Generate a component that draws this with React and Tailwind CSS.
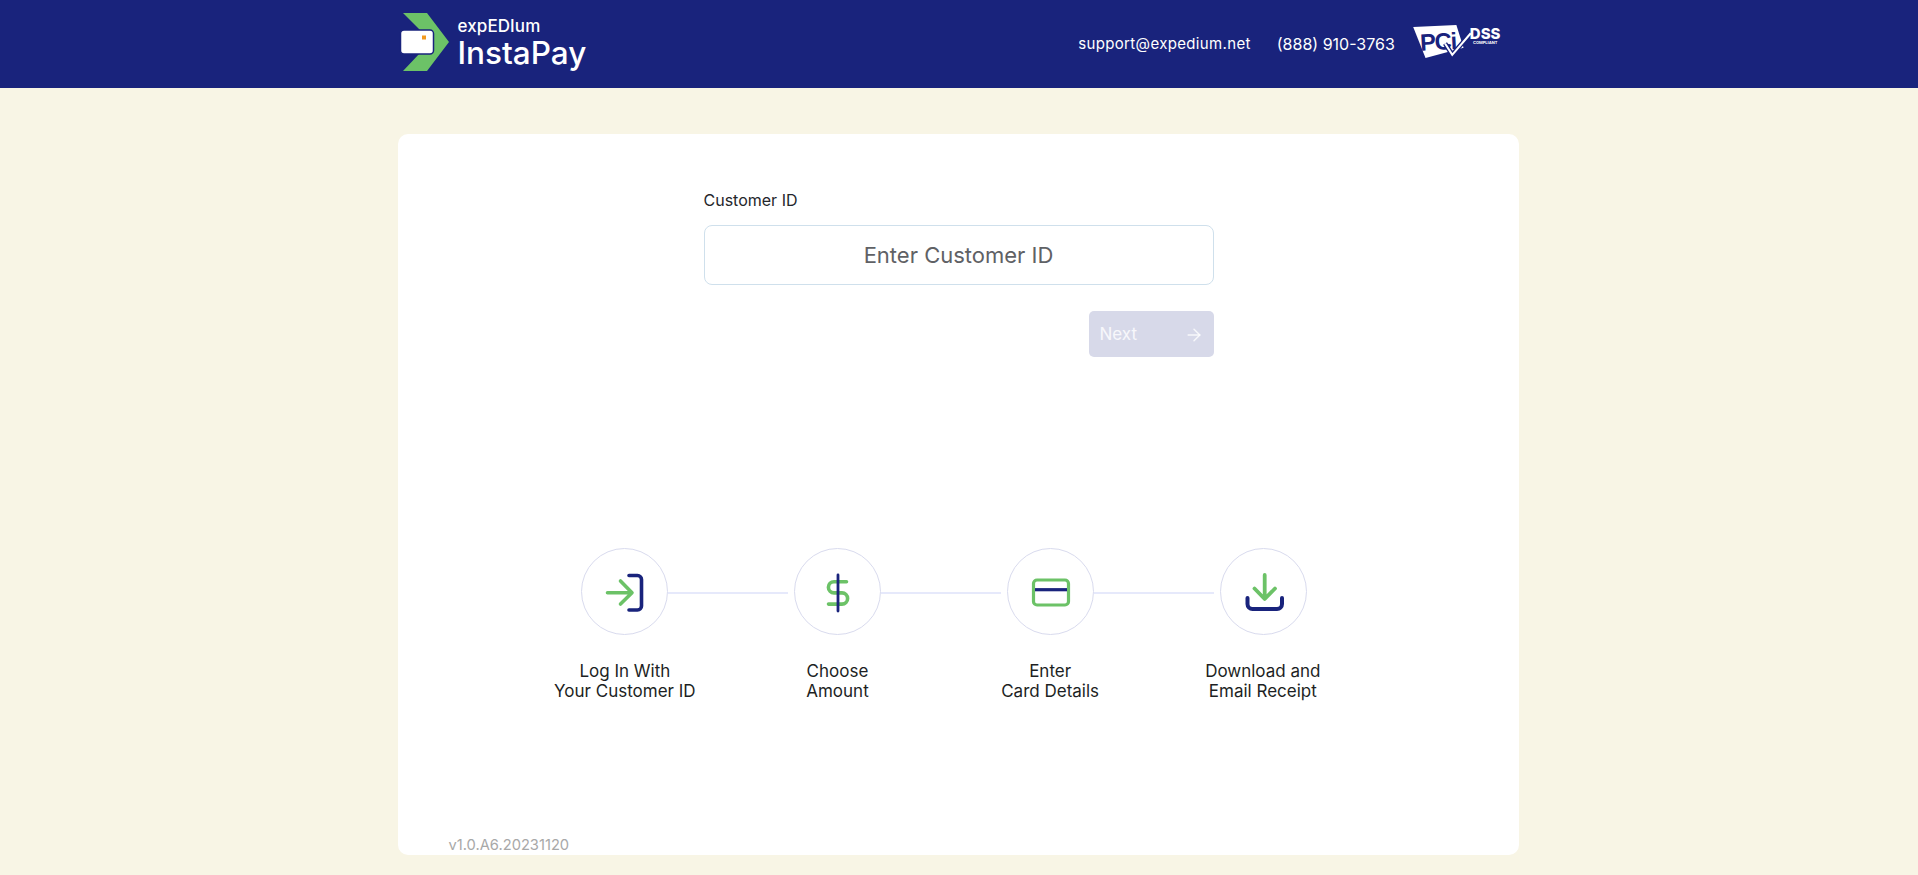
import { ArrowRight } from "lucide-react";

const steps = [
  { lines: ["Log In With", "Your Customer ID"], icon: "login" },
  { lines: ["Choose", "Amount"], icon: "dollar" },
  { lines: ["Enter", "Card Details"], icon: "card" },
  { lines: ["Download and", "Email Receipt"], icon: "download" },
];

const StepIcon = ({ icon }) => {
  const green = "#6cc267";
  const navy = "#19237c";
  return (
    <svg width="87" height="87" viewBox="0 0 87 87" fill="none" strokeLinecap="round" strokeLinejoin="round">
      {icon === "login" && (
        <>
          <path d="M26.5 44.7H50.5M39.5 33L51 44.7L39.5 56" stroke={green} strokeWidth="3.6" />
          <path d="M48 27.5H56.5a4 4 0 0 1 4 4V58a4 4 0 0 1-4 4H48" stroke={navy} strokeWidth="3.6" />
        </>
      )}
      {icon === "dollar" && (
        <>
          <path d="M52.5 33.7H40a5.6 5.6 0 0 0 0 11.2H48a5.6 5.6 0 0 1 0 11.2H34.5" stroke={green} strokeWidth="3.6" />
          <path d="M44 27V63" stroke={navy} strokeWidth="2.8" />
        </>
      )}
      {icon === "card" && (
        <>
          <rect x="26.5" y="32" width="35" height="25" rx="3.5" stroke={green} strokeWidth="3.2" />
          <path d="M28 41.7H60" stroke={navy} strokeWidth="3.2" strokeLinecap="butt" />
        </>
      )}
      {icon === "download" && (
        <>
          <path d="M44.7 27V50.5M34.5 40.5L44.7 51L55 40.5" stroke={green} strokeWidth="3.8" />
          <path d="M27.5 50V56a5 5 0 0 0 5 5H57a5 5 0 0 0 5-5V50" stroke={navy} strokeWidth="4" />
        </>
      )}
    </svg>
  );
};

const Logo = () => (
  <svg width="54" height="62" viewBox="0 0 54 62" fill="none">
    <path d="M5 3H29L51 32L29 61H5L22 43H30V20H22Z" fill="#6cc267" />
    <rect x="2.5" y="20" width="33" height="24" rx="3.5" fill="#ffffff" stroke="#19237c" strokeWidth="1.5" />
    <rect x="24" y="25.5" width="4" height="4" fill="#f39a1e" />
  </svg>
);

const PciLogo = () => (
  <svg width="60" height="37" viewBox="0 0 58 36" fill="none">
    <path d="M0 4L42 2L49 24L12 34Z" fill="#ffffff" />
    <text
      x="7"
      y="27"
      fill="#19237c"
      fontFamily="Liberation Sans, sans-serif"
      fontWeight="700"
      fontSize="23"
      letterSpacing="-1"
      transform="rotate(-3 7 27)"
    >
      PCi
    </text>
    <path d="M31 20L38 31L56 10" stroke="#19237c" strokeWidth="4.5" />
    <path d="M31 20L38 31L56 10" stroke="#ffffff" strokeWidth="2" />
  </svg>
);

export default function App() {
  return (
    <div className="min-h-[875px] flex flex-col bg-[#f8f5e5] font-['Inter',sans-serif]">
      <header className="h-[88px] bg-[#19237c] flex justify-center pr-[2px]">
        <div className="w-[1121px] flex items-center justify-between pr-[18px]">
          <div className="flex items-center gap-[6px]">
            <div className="-mt-[6px]">
              <Logo />
            </div>
            <div className="text-white pb-[2px]">
              <div className="text-[17px] leading-[18px] font-medium tracking-[0.1px]">expEDIum</div>
              <div className="mt-[2px] text-[31.5px] leading-[32px] font-medium">InstaPay</div>
            </div>
          </div>
          <div className="flex items-center text-white">
            <span className="text-[15px] tracking-[0.35px]">support@expedium.net</span>
            <span className="ml-[26px] text-[16px]">(888) 910-3763</span>
            <div className="ml-[18px] flex items-start -mt-[6px]">
              <PciLogo />
              <div className="-ml-[3px] mt-[4px] flex flex-col items-center">
                <span className="text-[15px] leading-[13px] font-extrabold">DSS</span>
                <span className="text-[4px] leading-[5px] font-bold">COMPLIANT</span>
              </div>
            </div>
          </div>
        </div>
      </header>

      <main className="flex justify-center pt-[46px] pb-[20px] pr-[2px]">
        <div className="w-[1121px] h-[721px] bg-white rounded-[10px] flex flex-col">
          <div className="w-[510px] ml-[306px] pt-[56px] flex flex-col">
            <label className="text-[16px] leading-[20px] text-[#24262b]">Customer ID</label>
            <input
              placeholder="Enter Customer ID"
              className="mt-[15px] h-[60px] w-full border border-[#cfe0ec] rounded-[8px] text-center text-[22px] outline-none placeholder:text-[#5f6165]"
            />
            <button className="mt-[26px] self-end w-[125px] h-[46px] rounded-[5px] bg-[#d7d9e9] text-white/80 text-[17px] flex items-center justify-between pt-[2px] pl-[11px] pr-[10px]">
              Next
              <ArrowRight size={20} strokeWidth={1.75} />
            </button>
          </div>

          <div className="mt-[191px] ml-[183px] flex items-center">
            {steps.map((step, i) => (
              <div key={step.icon} className="flex items-center">
                <div className="w-[87px] h-[87px] rounded-full border border-[#d9dbee]">
                  <div className="-m-px">
                    <StepIcon icon={step.icon} />
                  </div>
                </div>
                {i < steps.length - 1 && <div className="w-[120px] h-[2px] mt-[2px] mr-[6px] bg-[#e6e9fb]" />}
              </div>
            ))}
          </div>

          <div className="mt-[26px] ml-[121px] flex">
            {steps.map((step) => (
              <div key={step.icon} className="w-[212.67px] text-center text-[17px] leading-[20px] text-[#1d1f24]">
                {step.lines.map((line) => (
                  <div key={line}>{line}</div>
                ))}
              </div>
            ))}
          </div>

          <div className="mt-auto pl-[51px] pb-[1px] text-[14.7px] leading-[18px] text-[#a8a8a8]">v1.0.A6.20231120</div>
        </div>
      </main>
    </div>
  );
}
